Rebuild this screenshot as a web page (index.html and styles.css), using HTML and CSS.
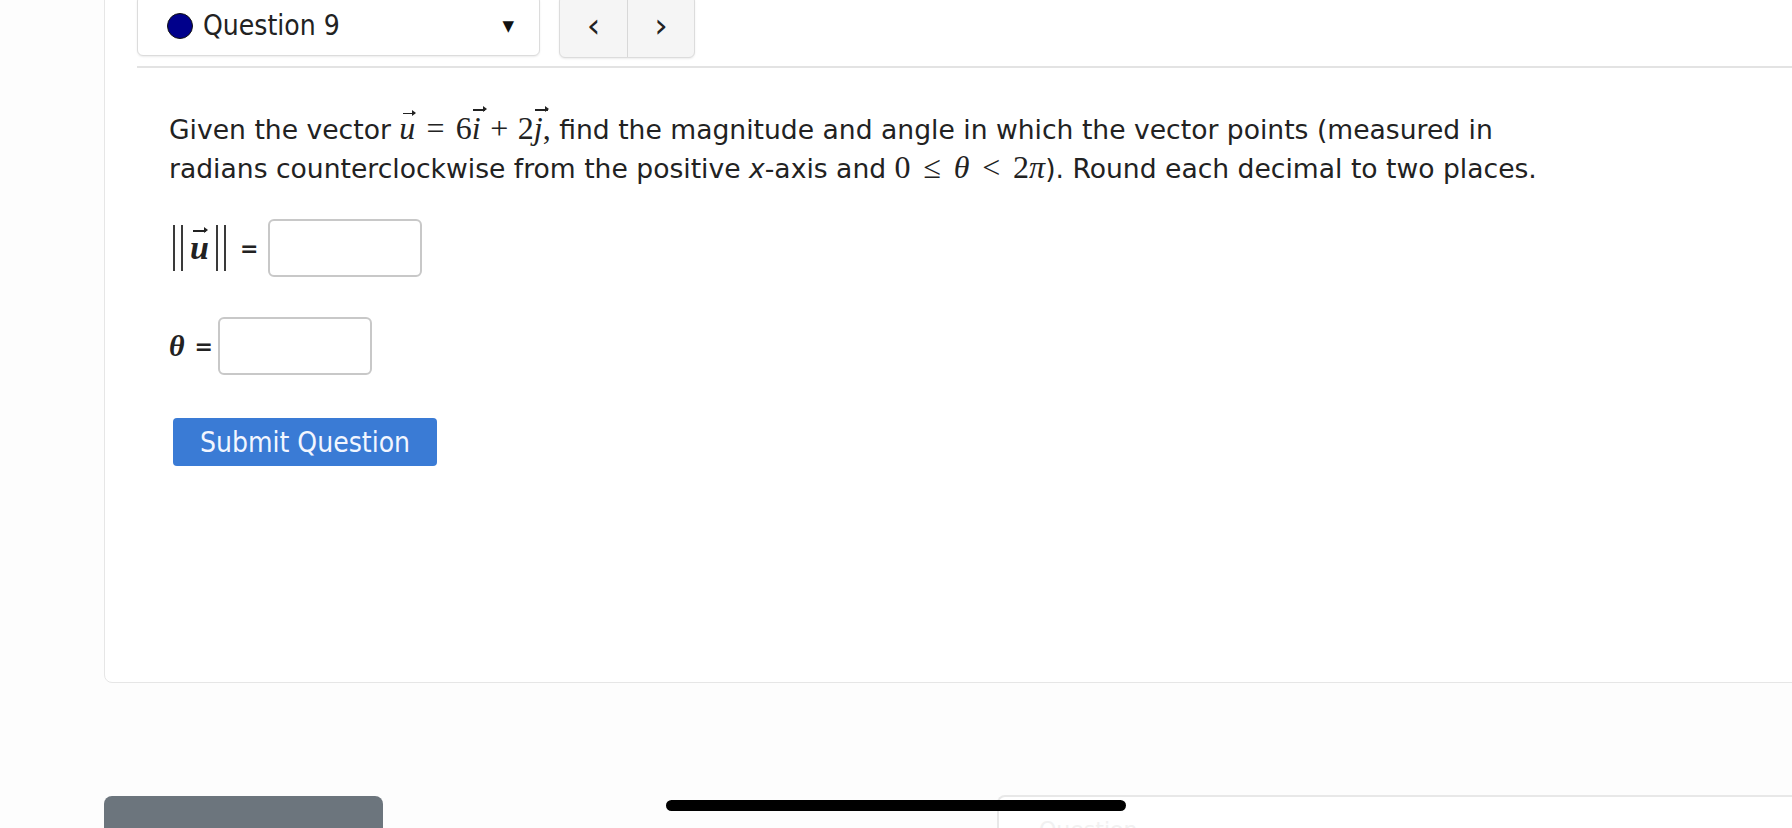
FILE: index.html
```html
<!DOCTYPE html>
<html>
<head>
<meta charset="utf-8">
<link rel="stylesheet" href="styles.css">
</head>
<body>
<div class="page">
  <div class="card">
    <div class="card-head">
      <div class="qselect">
        <span class="qdot"></span>
        <span class="qlabel">Question 9</span>
        <span class="qcaret">&#9660;</span>
      </div>
      <div class="qnav">
        <span class="navbtn">&lsaquo;</span>
        <span class="navbtn">&rsaquo;</span>
      </div>
    </div>
    <div class="rule"></div>
    <div class="card-body">
      <p class="question">Given the vector <span class="m"><span class="vec">u</span><span class="up rel">=</span><span class="up">6</span><span class="vec vi">i</span><span class="up bin">+</span><span class="up">2</span><span class="vec vj">j</span><span class="up">,</span></span> find the magnitude and angle in which the vector points (measured in<br>radians counterclockwise from the positive <i class="xi">x</i>-axis and <span class="m"><span class="up">0</span><span class="up rel2">&le;</span><span>&theta;</span><span class="up rel2">&lt;</span><span class="up">2</span><span>&pi;</span></span>). Round each decimal to two places.</p>
      <div class="answer-row row-mag">
        <span class="lbl"><span class="bar"></span><span class="bar"></span><span class="vec bold">u</span><span class="bar"></span><span class="bar"></span></span>
        <span class="eq">=</span>
        <span class="field"></span>
      </div>
      <div class="answer-row row-theta">
        <span class="lbl theta">&theta;</span>
        <span class="eq">=</span>
        <span class="field"></span>
      </div>
      <button class="submit">Submit Question</button>
    </div>
  </div>
  <div class="bottom">
    <div class="graybtn">Watch Video</div>
    <div class="lowercard"><span class="faint">Question</span></div>
  </div>
</div>
<div class="home-indicator"></div>
</body>
</html>
```
FILE: styles.css
```css
html, body {
  margin: 0;
  padding: 0;
  overflow: hidden;
  width: 1792px;
  height: 828px;
  background: #fdfdfd;
}
.page {
  font-family: "DejaVu Sans", sans-serif;
  color: #222;
  padding-left: 104px;
}
.card {
  margin-top: -30px;
  width: 1800px;
  height: 713px;
  box-sizing: border-box;
  border: 1px solid #e6e6e6;
  border-radius: 8px;
  background: #fff;
}
.card-head {
  display: flex;
  align-items: flex-start;
  gap: 19px;
  padding-left: 32px;
  padding-top: 24px;
}
.qselect {
  width: 403px;
  height: 61px;
  box-sizing: border-box;
  border: 1px solid #dcdcdc;
  border-radius: 6px;
  box-shadow: 0 1px 2px rgba(0,0,0,0.08);
  display: flex;
  align-items: center;
  padding: 0 25px 0 29px;
  background: #fff;
}
.qdot {
  width: 26px;
  height: 26px;
  border-radius: 50%;
  background: #00008b;
  border: 1px solid #111;
  box-sizing: border-box;
  flex: none;
}
.qlabel {
  margin-left: 10px;
  font-family: "DejaVu Sans Condensed", "DejaVu Sans", sans-serif;
  font-stretch: condensed;
  font-size: 28px;
  color: #222;
  flex: 1;
}
.qcaret {
  font-size: 15px;
  color: #111;
}
.qnav {
  display: flex;
  height: 61px;
  border: 1px solid #dcdcdc;
  border-radius: 6px;
  overflow: hidden;
  background: #f5f5f5;
  box-shadow: 0 1px 2px rgba(0,0,0,0.08);
}
.navbtn {
  width: 67px;
  display: flex;
  align-items: center;
  justify-content: center;
  padding-bottom: 4px;
  box-sizing: border-box;
  font-size: 34px;
  color: #222;
}
.navbtn + .navbtn {
  border-left: 1px solid #d8d8d8;
}
.rule {
  margin-left: 32px;
  margin-top: 8px;
  height: 2px;
  background: #e3e3e3;
}
.card-body {
  padding-left: 64px;
}
.question {
  margin: 42px 0 0 0;
  font-size: 26.6px;
  line-height: 39px;
  white-space: nowrap;
}
.m {
  font-family: "Liberation Serif", serif;
  font-size: 32px;
  font-style: italic;
  line-height: 1;
}
.m .up {
  font-style: normal;
}
.rel {
  margin: 0 0.35em;
}
.rel2 {
  margin: 0 0.4em;
}
.bin {
  margin: 0 0.3em;
}
.xi {
  font-style: italic;
}
.vec {
  position: relative;
  display: inline-block;
  font-family: "Liberation Serif", serif;
  font-style: italic;
}
.vec::before {
  content: "";
  position: absolute;
  left: 0.1em;
  top: 0.02em;
  width: 0.38em;
  height: 0.055em;
  background: currentColor;
}
.vec::after {
  content: "";
  position: absolute;
  left: 0.4em;
  top: -0.06em;
  border-left: 0.13em solid currentColor;
  border-top: 0.1em solid transparent;
  border-bottom: 0.1em solid transparent;
}
.vi::before, .vj::before {
  left: 0.05em;
  top: -0.1em;
}
.vi::after, .vj::after {
  left: 0.35em;
  top: -0.18em;
}
.answer-row {
  display: flex;
  align-items: center;
}
.row-mag {
  margin-top: 31px;
}
.row-theta {
  margin-top: 40px;
}
.lbl {
  display: flex;
  align-items: center;
  font-family: "Liberation Serif", serif;
  font-size: 30px;
  font-weight: bold;
  padding-left: 4px;
}
.bar {
  display: inline-block;
  width: 2px;
  height: 46px;
  background: #3a3a3a;
  margin-right: 6px;
}
.vec.bold {
  font-size: 34px;
  font-weight: bold;
  margin: 0 7px 0 1px;
}
.theta {
  font-style: italic;
  padding-left: 0;
}
.eq {
  font-size: 22px;
  font-weight: bold;
  margin: 0 10px 0 8px;
}
.row-theta .eq {
  margin: 0 5px 0 10px;
}
.field {
  width: 154px;
  height: 58px;
  box-sizing: border-box;
  border: 2px solid #c8c8c8;
  border-radius: 6px;
  background: #fff;
}
.submit {
  display: block;
  margin: 43px 0 0 4px;
  width: 264px;
  height: 48px;
  border: none;
  border-radius: 4px;
  background: #3a7bd5;
  color: #f2f6ff;
  font-family: "DejaVu Sans Condensed", "DejaVu Sans", sans-serif;
  font-stretch: condensed;
  font-size: 28px;
  padding: 0;
}
.bottom {
  display: flex;
  align-items: flex-start;
  margin-top: 112px;
}
.graybtn {
  flex: none;
  width: 279px;
  height: 60px;
  margin-top: 1px;
  background: #6c757d;
  border-radius: 8px 8px 0 0;
  color: #fff;
  font-size: 24px;
  text-align: center;
  padding-top: 29px;
  box-sizing: border-box;
}
.lowercard {
  flex: none;
  margin-left: 614px;
  width: 900px;
  height: 60px;
  border: 2px solid #e8e8e8;
  border-bottom: none;
  border-radius: 8px 0 0 0;
  background: #fff;
  box-sizing: border-box;
  padding: 20px 0 0 40px;
}
.faint {
  color: #f1f1f1;
  font-size: 22px;
}
.home-indicator {
  position: fixed;
  left: 666px;
  top: 800px;
  width: 460px;
  height: 11px;
  border-radius: 6px;
  background: #000;
}
```
